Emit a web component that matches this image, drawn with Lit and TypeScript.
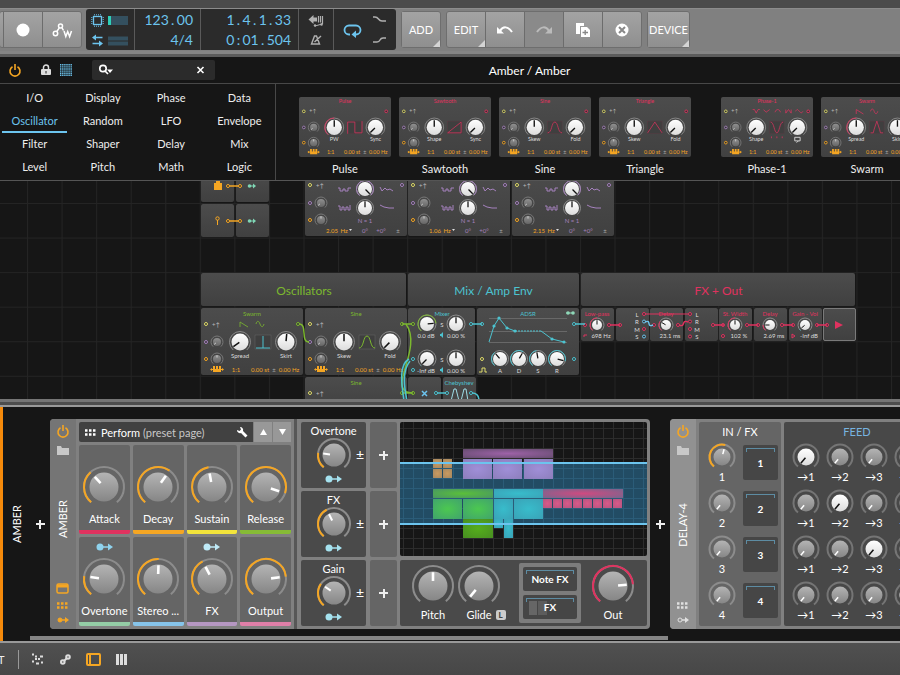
import { LitElement, html, svg, css, nothing } from "lit";
import { customElement, state } from "lit/decorators.js";
import { classMap } from "lit/directives/class-map.js";
import { styleMap } from "lit/directives/style-map.js";

const AMBER = "#f5a623";
const BLUE = "#6cc4ee";
const CYAN = "#4cc3d0";
const GREEN = "#7cb82f";
const PINK = "#e0325f";
const LILAC = "#a581bd";
const YELLOW = "#e0dc6a";

/* ---------- shared drawing helpers ---------- */

const point = (cx: number, cy: number, r: number, deg: number) => {
  const a = (deg * Math.PI) / 180;
  return [(cx + r * Math.sin(a)).toFixed(2), (cy - r * Math.cos(a)).toFixed(2)];
};

const arc = (cx: number, cy: number, r: number, from: number, to: number) => {
  const [x0, y0] = point(cx, cy, r, from);
  const [x1, y1] = point(cx, cy, r, to);
  return `M${x0} ${y0}A${r} ${r} 0 ${to - from > 180 ? 1 : 0} 1 ${x1} ${y1}`;
};

interface Dial {
  x: number;
  y: number;
  r: number;
  ring: number;
  angle: number;
  label: string;
  from?: number;
  color?: string;
  paint?: "light" | "mid" | "dim";
  stroke?: number;
  track?: string;
  live?: boolean;
}

const dial = (d: Dial) => {
  const paint = d.paint ?? "mid";
  const w = d.stroke ?? 2;
  const light = paint === "light";
  const [ax, ay] = point(d.x, d.y, light ? d.r * 0.1 : d.r * 0.35, d.angle);
  const [bx, by] = point(d.x, d.y, d.r * 0.95, d.angle);
  const size = d.ring * 2;
  return svg`
    <path d=${arc(d.x, d.y, d.ring, -140, 140)} fill="none" stroke=${d.track ?? "#8c8c8c"} stroke-width=${w}></path>
    ${d.color ? svg`<path d=${arc(d.x, d.y, d.ring, d.from ?? -140, d.angle)} fill="none" stroke=${d.color} stroke-width=${w}></path>` : nothing}
    <circle cx=${d.x} cy=${d.y} r=${d.r} fill="url(#${paint})"></circle>
    <path d="M${ax} ${ay}L${bx} ${by}" stroke=${light ? "#111" : paint === "dim" ? "#ccc" : "#fff"} stroke-width=${Math.max(1, d.r * 0.18)}></path>
    ${d.live === false ? nothing : svg`<foreignObject x=${d.x - d.ring} y=${d.y - d.ring} width=${size} height=${size}>
      <input class="drag" type="range" min="-140" max="140" .value=${String(d.angle)} aria-label=${d.label}>
    </foreignObject>`}`;
};

const paints = html`<svg class="paints" width="0" height="0" aria-hidden="true"><defs>
  <linearGradient id="light" x1="0" y1="0" x2="0" y2="1"><stop offset="0" stop-color="#fff"/><stop offset="1" stop-color="#dcdcdc"/></linearGradient>
  <linearGradient id="mid" x1="0" y1="0" x2="0" y2="1"><stop offset="0" stop-color="#b4b4b4"/><stop offset="1" stop-color="#868686"/></linearGradient>
  <linearGradient id="dim" x1="0" y1="0" x2="0" y2="1"><stop offset="0" stop-color="#8f8f8f"/><stop offset="1" stop-color="#666"/></linearGradient>
</defs></svg>`;

const port = (x: number, y: number, c: string) =>
  svg`<circle cx=${x} cy=${y} r="1.5" fill="#333" stroke=${c} stroke-width="1"></circle>`;

const txt = (x: number, y: number, s: string, fill = "#ddd", size = "s6") =>
  svg`<text class=${size} x=${x} y=${y} fill=${fill}>${s}</text>`;

const line = (d: string, c: string, w = 1) =>
  svg`<path d=${d} fill="none" stroke=${c} stroke-width=${w} stroke-linejoin="round"></path>`;

const shared = css`
  * { box-sizing: border-box; }
  :host { display: block; font-family: Lato, "Open Sans", sans-serif; color: #eee; }
  button { font: inherit; color: inherit; border: 0; margin: 0; padding: 0; background: none; cursor: pointer; }
  svg { display: block; overflow: visible; }
  .paints { position: absolute; }
  .drag { appearance: none; display: block; width: 100%; height: 100%; margin: 0; opacity: 0; cursor: ns-resize; }
  text { text-anchor: middle; dominant-baseline: central; font-family: Lato, "Open Sans", sans-serif; }
  .s6 { font-size: 6px; }
  .s12 { font-size: 12px; }
`;

/* ---------- oscillator module face, 102 x 67 ---------- */

interface Face {
  title: string;
  left: string;
  right: string;
  color: string;
  wave: string;
  leftAngle: number;
  rightAngle: number;
  leftArc?: boolean;
  row?: string[];
  live?: boolean;
  palette?: boolean;
}

const WAVES: Record<string, string> = {
  pulse: "M-8 7V-6H0V6H8V-7",
  saw: "M-8 6L7 -6V6Z",
  bell: "M-8 6C-3 6 -4 -6 0 -6S3 6 8 6",
  tri: "M-8 6L0 -6L8 6",
  valley: "M-7 -6C-3 -6 -3 6 0 6S3 -6 7 -6M-6 10V12M0 10V12M6 10V12",
  spike: "M-7 6H-4L-3 2L0 -7L3 2L4 6H7",
  impulse: "M-7 6H7M0 6V-6",
};

const faceTop = (title: string, color: string) => svg`
  ${txt(51, 5, title, color)}
  ${port(5, 16, YELLOW)}${txt(15, 16, "+↑", "#bbb")}${port(97, 16, color)}`;

const oscillator = (f: Face) => svg`
  ${faceTop(f.title, f.color)}
  ${port(5, 34, LILAC)}${port(5, 51, AMBER)}
  ${dial({ x: 16, y: 34, r: 4, ring: 6, angle: -130, label: `${f.title} phase amount`, paint: "dim", stroke: 1, track: "#777", live: f.live })}
  ${dial({ x: 16, y: 51, r: 4, ring: 6, angle: 0, label: `${f.title} pitch amount`, paint: "dim", stroke: 1, track: "#777", live: f.live })}
  ${dial({ x: 39, y: 34, r: 8.5, ring: 10.5, angle: f.leftAngle, label: f.left, paint: "light", color: f.leftArc ? f.color : undefined, stroke: 1, live: f.live })}
  ${dial({ x: 85, y: 34, r: 8.5, ring: 10.5, angle: f.rightAngle, label: f.right || "Shape", paint: "light", stroke: 1, live: f.live })}
  <rect x="54" y="27" width="16" height="14" fill="#3f3f3f" stroke=${f.palette ? "#5c3a44" : "#666"} stroke-width=".5"></rect>
  <g transform="translate(62 34)" opacity=${f.palette ? 0.8 : 1}>${line(WAVES[f.wave], f.wave === "impulse" ? CYAN : f.color)}</g>
  ${(f.row ?? []).map((d, i, all) => svg`<g transform="translate(${all.length > 2 ? 39 + i * 12 : 43 + i * 16} 16)" opacity=".8">${line(d, f.color)}</g>`)}
  ${txt(39, 47, f.left)}
  ${f.right ? txt(85, 47, f.right) : line("M82 45H88V49H82ZM84 51L86 49", "#ddd")}
  <g fill=${AMBER}><path d="M12 58H14V61H15V58H17V61H18V58H20V64H12ZM11 60V63L9 61.500ZM21 60V63L23 61.500Z"></path><path d="M10 61H22V62H10Z"></path></g>
  ${txt(35, 61, "1:1", AMBER)}${txt(59, 61, "0.00 st", AMBER)}${txt(73, 61, "±", "#aaa")}${txt(88, 61, "0.00 Hz", AMBER)}`;

const MINI = ["M-4 -2H-2L0 2L2 -2H4", "M-4 -2L-1 1L3 -2", "M-3 1C-2 -3 2 -3 3 1", "M-3 -2V2L0 -2L3 2V-2", "M-4 0C-2 -4 -1 -1 0 0S3 3 4 0"];
const SWARM_ROW = ["M-4 3V-2L4 3", "M-4 0C-3 -4 -1 -3 0 0S3 4 4 0"];

const PALETTE: Array<Face & { name: string; gap?: boolean }> = [
  { name: "Pulse", title: "Pulse", left: "PW", right: "Sync", color: PINK, wave: "pulse", leftAngle: 0, rightAngle: -135, leftArc: true },
  { name: "Sawtooth", title: "Sawtooth", left: "Shape", right: "Sync", color: PINK, wave: "saw", leftAngle: 0, rightAngle: -135 },
  { name: "Sine", title: "Sine", left: "Skew", right: "Fold", color: PINK, wave: "bell", leftAngle: 0, rightAngle: -135 },
  { name: "Triangle", title: "Triangle", left: "Skew", right: "Fold", color: PINK, wave: "tri", leftAngle: 0, rightAngle: -135 },
  { name: "Phase-1", title: "Phase-1", left: "Shape", right: "", color: PINK, wave: "valley", leftAngle: -135, rightAngle: -135, row: MINI, gap: true },
  { name: "Swarm", title: "Swarm", left: "Spread", right: "Skirt", color: PINK, wave: "spike", leftAngle: 0, rightAngle: 0, leftArc: true, row: SWARM_ROW },
];

/* ---------- transport bar ---------- */

const lcd = (s: string) => [...s].map((c) => (/[.:]/.test(c) ? html`<span class="dot">${c}</span>` : c));

@customElement("transport-bar")
export class TransportBar extends LitElement {
  static styles = [shared, css`
    :host { background: #808080; border-top: 8px solid #4b4b4b; border-bottom: 3px solid #5c5c5c; height: 57px; box-shadow: inset 0 1px #8c8c8c, inset 0 -3px #858585; flex: none; }
    .bar { display: flex; align-items: center; height: 43px; overflow: hidden; }
    .group { display: flex; gap: 1px; height: 35px; border-radius: 2px; background: #6c6c6c; outline: 1px solid #6e6e6e; flex: none; }
    .key { position: relative; width: 38px; display: grid; place-items: center; background: linear-gradient(#a3a3a3, #8f8f8f); color: #fff; font-size: 11px; }
    .key:first-child { border-radius: 2px 0 0 2px; }
    .key:last-child { border-radius: 0 2px 2px 0; }
    .edge { width: 3px; }
    .off { background: #8a8a8a; color: #bbb; }
    .wide { width: 41px; }
    .menu::after { content: ""; position: absolute; right: 0; bottom: 0; border: solid; border-width: 0 0 7px 7px; border-color: transparent transparent #d4d4d4 transparent; }
    .display { display: flex; height: 41px; margin: 0 6px 0 5px; background: #2b2b2b; border-radius: 3px; flex: none; color: #6cc4ee; }
    .cell { display: flex; flex-direction: column; justify-content: center; border-right: 1px solid #5a5a5a; }
    .cell:last-child { border: 0; }
    .load { width: 49px; }
    .tempo { width: 66px; padding-right: 7px; }
    .clock { width: 98px; padding-right: 7px; }
    .cues { width: 35px; align-items: center; }
    .loop { width: 62px; }
    .lcd { font-size: 14px; line-height: 19px; text-align: right; }
    .lcd + .lcd { margin-top: 1px; }
    .dot { display: inline-block; width: 8px; text-align: center; }
    .next { margin-left: 7px; }
  `];

  render() {
    return html`<div class="bar">
      <div class="group">
        <button class="key edge" aria-label="Play"></button>
        <button class="key" aria-label="Record"><svg width="16" height="16"><circle cx="8" cy="8" r="6.500" fill="#fff"/></svg></button>
        <button class="key" aria-label="Write automation"><svg width="20" height="16" fill="none" stroke="#fff" stroke-width="1.500"><circle cx="3.500" cy="11.500" r="2.200"/><circle cx="8.500" cy="4" r="2"/><path d="M4.800 9.500L7.300 5.800M10 5.800L11.500 8.500"/><path d="M12 9L13.800 14.500L15.700 9.500L17.600 14.500L19.500 9"/></svg></button>
      </div>
      <div class="display">
        <div class="cell load"><svg width="48" height="40" fill="none" stroke=${BLUE}>
          <rect x="7.500" y="6.500" width="8" height="8" stroke-width="1.300"/><path d="M8 4.800H15.500M8 16.200H15.500M5.800 7V14.500M17.200 7V14.500" stroke-dasharray="1 1"/>
          <path d="M9 27.500H16.500M6.500 33.500H14" stroke-width="1.500"/><path d="M10 24.500L6 27.500L10 30.500ZM13 30.500L17 33.500L13 36.500Z" fill=${BLUE} stroke="none"/>
          <path d="M22 28.500H42M22 33.500H42" stroke="#34505f" stroke-width="4"/><path d="M22 10.500H42" stroke="#34505f" stroke-width="9"/><path d="M23.500 6V15" stroke="#2fd0b8" stroke-width="3"/>
        </svg></div>
        <div class="cell tempo"><div class="lcd">${lcd("123.00")}</div><div class="lcd">4/4</div></div>
        <div class="cell clock"><div class="lcd">${lcd("1.4.1.33")}</div><div class="lcd">${lcd("0:01.504")}</div></div>
        <div class="cell cues"><svg width="34" height="40" fill="none" stroke="#b0b0b0">
          <path d="M9.500 9.500L14.500 5V14Z" fill="#b0b0b0" stroke="none"/><path d="M14 9.500H18" stroke-width="4"/><path d="M19.500 6V12.500M21.500 6V12.500M23.500 6V14" stroke-width="1.200"/><path d="M16 16L23 14"/><circle cx="16" cy="15.500" r="1.200" fill="#b0b0b0" stroke="none"/><circle cx="22.500" cy="14.500" r="1.300" fill="#b0b0b0" stroke="none"/>
          <path d="M12.500 34L15.500 26H17.500L20.500 34ZM15.500 32L22 26" stroke-width="1.400"/>
        </svg></div>
        <div class="cell loop"><svg width="62" height="40" fill="none">
          <path d="M16 24.500H15A4.500 4.500 0 0 1 15 15.500H22A4.500 4.500 0 0 1 22 24.500H20" stroke=${BLUE} stroke-width="1.800"/><path d="M22 20.500L17.500 24.500L22 28Z" fill=${BLUE}/>
          <path d="M39 7H41C45 7 44 11 48 11H52M39 32H43C47 32 45 28 49 28H52" stroke="#b0b0b0" stroke-width="1.500"/>
        </svg></div>
      </div>
      <div class="group"><button class="key menu">ADD</button></div>
      <div class="group next">
        <button class="key menu">EDIT</button>
        <button class="key" aria-label="Undo"><svg width="18" height="12" fill="none" stroke="#fff" stroke-width="2"><path d="M4 7C7 2 12 2 16 8"/><path d="M1 3V9.500H8Z" fill="#fff" stroke="none"/></svg></button>
        <button class="key off" aria-label="Redo" disabled><svg width="18" height="12" fill="none" stroke="#bbb" stroke-width="2"><path d="M14 7C11 2 6 2 2 8"/><path d="M17 3V9.500H10Z" fill="#bbb" stroke="none"/></svg></button>
        <button class="key" aria-label="Duplicate"><svg width="16" height="16"><path d="M1 1H9V4H5V12H1Z" fill="#fff"/><path d="M6 5H12L15 8V15H6Z" fill="#fff"/><path d="M7.500 10.500H13M10.200 8V13" stroke="#888" stroke-width="1.300"/></svg></button>
        <button class="key" aria-label="Delete"><svg width="14" height="14"><circle cx="7" cy="7" r="6.500" fill="#fff"/><path d="M4 4L10 10M10 4L4 10" stroke="#888" stroke-width="2"/></svg></button>
      </div>
      <div class="group next"><button class="key wide menu">DEVICE</button></div>
    </div>`;
  }
}

/* ---------- module palette ---------- */

const CATEGORIES = ["I/O", "Display", "Phase", "Data", "Oscillator", "Random", "LFO", "Envelope", "Filter", "Shaper", "Delay", "Mix", "Level", "Pitch", "Math", "Logic"];

const power = (c: string) => svg`<path d="M3.500 2.800A5 5 0 1 0 8.500 2.800M6 0V6" fill="none" stroke=${c} stroke-width="1.600"></path>`;

@customElement("module-palette")
export class ModulePalette extends LitElement {
  @state() private category = "Oscillator";

  static styles = [shared, css`
    :host { background: #161616; flex: none; }
    .head { display: flex; align-items: center; height: 27px; border-bottom: 1px solid #484848; }
    .tools { display: flex; align-items: center; padding-left: 9px; }
    .tools > * { flex: none; }
    .tools > button:nth-child(2) { margin: 0 9px 0 20px; }
    .search { display: flex; align-items: center; width: 123px; height: 20px; margin-left: 20px; padding: 0 11px 0 7px; border-radius: 2px; background: #2b2b2b; }
    .search input { flex: 1; min-width: 0; height: 16px; border: 0; background: none; color: #eee; font: inherit; font-size: 11px; outline: none; }
    .title { flex: 1; margin: 0; padding-right: 56px; text-align: center; font-size: 12px; font-weight: 400; color: #fff; }
    .body { display: flex; height: 97px; border-bottom: 1px solid #555; }
    .cats { flex: none; width: 276px; padding: 3px 2px 0 0; display: grid; grid-template-columns: repeat(4, 1fr); grid-auto-rows: 23px; border-right: 1px solid #484848; }
    .cat { font-size: 11px; margin: 0 1px 0 2px; border-bottom: 2px solid transparent; }
    .cat.on { color: #6cc4ee; border-color: #6cc4ee; }
    .list { display: flex; gap: 8px; min-width: 0; overflow: hidden; padding: 13px 0 0 23px; margin: 0; list-style: none; }
    .apart { margin-left: 22px; }
    .card { display: block; width: 92px; font-size: 11px; line-height: 23px; }
    .thumb { display: block; height: 60px; border-radius: 2px; background: linear-gradient(#4c4c4c, #414141); }
  `];

  render() {
    return html`${paints}
      <header class="head">
        <div class="tools">
          <button aria-label="Power"><svg width="12" height="12">${power(AMBER)}</svg></button>
          <button aria-label="Lock"><svg width="10" height="12"><rect x="0" y="5" width="10" height="6" rx="1" fill="#ddd"/><path d="M2.500 5V3.500A2.500 2.500 0 0 1 7.500 3.500V5" stroke="#ddd" stroke-width="1.500" fill="none"/><path d="M5 7V9.500" stroke="#222"/></svg></button>
          <button aria-label="Grid"><svg width="12" height="12">${[0.8, 2.9, 5, 7.1, 9.2, 11.3].map((y) => svg`<path d="M0 ${y}H12" stroke=${BLUE} stroke-width="1.400" stroke-dasharray="1.400 .7"></path>`)}</svg></button>
          <label class="search">
            <svg width="14" height="12" fill="none" stroke="#fff" stroke-width="1.700"><circle cx="4" cy="4.500" r="3.200"/><path d="M6 7L9 10"/><path d="M8 5.500H14L11 9Z" fill="#fff" stroke="none"/></svg>
            <input type="text" aria-label="Search modules">
            <button aria-label="Clear search"><svg width="7" height="8"><path d="M.5 1L6.500 7M6.500 1L.5 7" stroke="#fff" stroke-width="1.600"/></svg></button>
          </label>
        </div>
        <h1 class="title">Amber / Amber</h1>
      </header>
      <div class="body">
        <nav class="cats">${CATEGORIES.map((c) => html`<button class=${classMap({ cat: true, on: c === this.category })} aria-pressed=${c === this.category} @click=${() => (this.category = c)}>${c}</button>`)}</nav>
        <ul class="list">${PALETTE.map((f) => html`<li class=${f.gap ? "apart" : ""}><button class="card"><span class="thumb"><svg width="92" height="60" viewBox="0 0 102 67">${oscillator({ ...f, live: false, palette: true })}</svg></span>${f.name}</button></li>`)}</ul>
      </div>`;
  }
}

/* ---------- patch canvas ---------- */

const PITCH = 34.56;
const cellX = (col: number) => 201 + Math.round(col * PITCH);
const cellY = (row: number) => 23 + Math.round(row * PITCH);

const lfo = (rate: string) => svg`
  ${port(5, 16, YELLOW)}${txt(15, 16, "+↑", "#bbb")}${port(5, 34, LILAC)}${port(5, 51, AMBER)}${port(97, 16, LILAC)}
  ${dial({ x: 16, y: 34, r: 4, ring: 6, angle: -130, label: "Phase amount", paint: "dim", stroke: 1, track: "#777" })}
  ${dial({ x: 16, y: 51, r: 4, ring: 6, angle: 0, label: "Rate amount", paint: "dim", stroke: 1, track: "#777" })}
  ${dial({ x: 60, y: 20, r: 7, ring: 8.5, angle: 135, label: "Smooth", paint: "light", color: LILAC, stroke: 1 })}
  ${dial({ x: 60, y: 39, r: 7, ring: 8.5, angle: 0, label: "Feedback", paint: "light", stroke: 1 })}
  ${line("M33 19H35V22H38V20H40V22H43V19H46", LILAC)}
  ${line("M75 18L77 22L80 19L82 21L85 20L88 22", LILAC)}
  ${line("M33 37H35V41H37V38H39V41H41V38H43V41H45V36", LILAC)}
  ${line("M75 36L79 38L84 39L89 39", LILAC)}
  ${txt(60, 51, "N = 1", LILAC)}
  ${txt(27, 61, rate, AMBER)}${txt(39, 61, "Hz", AMBER)}<path d="M44 60H47L45.500 62Z" fill="#ddd"></path>
  ${txt(60, 61, "0°", LILAC)}${txt(76, 61, "+0°", LILAC)}${txt(93, 61, "±", "#aaa")}`;

const smallFx = (title: string, value: string, angle: number, color: string) => svg`
  ${txt(16, 5, title, PINK)}
  ${dial({ x: 16, y: 17, r: 5, ring: 7, angle, label: title, paint: "light", color, stroke: 1 })}
  ${txt(20, 27, value)}${port(4, 17, PINK)}${port(28, 17, PINK)}`;

const lrms = (labelX: number, portX: number, colors: string[]) =>
  ["L", "R", "M", "S"].map((s, i) => svg`${txt(labelX, 6 + i * 7.5, s)}${port(portX, 6 + i * 7.5, colors[i])}`);

const strip = (y: number, db: string, angle: number, color: string) => svg`
  ${dial({ x: 19, y, r: 7, ring: 9, angle, label: "Level", paint: "light", color, stroke: 1 })}
  ${dial({ x: 48, y, r: 7, ring: 9, angle: 0, label: "Pan", paint: "light", stroke: 1 })}
  ${txt(34, y, "S")}${txt(18, y + 11, db)}${txt(48, y + 11, "0.00 %")}
  <path d="M32 ${y + 10}H33L35 ${y + 8}V${y + 14}L33 ${y + 12}H32Z" fill=${CYAN}></path>`;

const adsr = svg`
  ${txt(51, 5, "ADSR", CYAN)}
  ${line("M89 5H96", "#8fd8b8", 1)}<circle cx="91" cy="5" r="1.800" fill="#8fd8b8"></circle><circle cx="96" cy="5" r="1.800" fill="#8fd8b8"></circle>
  ${line("M12 10.500H90M12 23.500H90M12 34.500H90", "#686868")}
  ${line("M12 34L17 18L22 10L30 20L38 23M64 23L75 31L87 34", CYAN, 1)}
  <path d="M38 23H64" stroke=${CYAN} stroke-dasharray="2 1"></path>
  ${[[17, 18], [22, 10], [30, 20], [38, 23], [75, 31], [87, 34]].map(([x, y]) => svg`<circle cx=${x} cy=${y} r="1.600" fill=${CYAN}></circle>`)}
  ${[["A", 23, -40], ["D", 42, 30], ["S", 61, -10], ["R", 80, 105]].map(([n, x, a]) => svg`${dial({ x: x as number, y: 51, r: 7, ring: 8.5, angle: a as number, label: n as string, paint: "light", color: CYAN, stroke: 1 })}${txt(x as number, 62, n as string)}`)}
  ${port(5, 51, YELLOW)}${line("M2 64H5V60H8V64H10", YELLOW)}
  ${port(5, 16, CYAN)}${port(97, 16, CYAN)}${port(97, 51, CYAN)}`;

const heading = (w: number, s: string, c: string) => svg`<text class="s12" x=${w / 2} y="17" fill=${c}>${s}</text>`;

interface Node { col: number; row: number; w: number; h: number; art: unknown; sel?: boolean }

const NODES: Node[] = [
  { col: 0, row: -1, w: 1, h: 1, art: svg`<path d="M13 14H15V12H19V14H21V21H13Z" fill=${AMBER}></path>` },
  { col: 1, row: -1, w: 1, h: 1, art: nothing },
  { col: 0, row: 0, w: 1, h: 1, art: svg`<circle cx="16.500" cy="14.500" r="1.700" fill="none" stroke=${AMBER}></circle>${line("M16.500 16V21", AMBER, 1)}` },
  { col: 1, row: 0, w: 1, h: 1, art: nothing },
  { col: 3, row: -1, w: 3, h: 2, art: lfo("2.05") },
  { col: 6, row: -1, w: 3, h: 2, art: lfo("1.06") },
  { col: 9, row: -1, w: 3, h: 2, art: lfo("2.15") },
  { col: 0, row: 2, w: 6, h: 1, art: heading(206, "Oscillators", GREEN) },
  { col: 6, row: 2, w: 5, h: 1, art: heading(171, "Mix / Amp Env", CYAN) },
  { col: 11, row: 2, w: 8, h: 1, art: heading(275, "FX + Out", PINK) },
  { col: 0, row: 3, w: 3, h: 2, art: oscillator({ title: "Swarm", left: "Spread", right: "Skirt", color: GREEN, wave: "impulse", leftAngle: -125, rightAngle: 5, row: SWARM_ROW }) },
  { col: 3, row: 3, w: 3, h: 2, art: oscillator({ title: "Sine", left: "Skew", right: "Fold", color: GREEN, wave: "bell", leftAngle: 0, rightAngle: -135 }) },
  { col: 3, row: 5, w: 3, h: 1, art: faceTop("Sine", GREEN) },
  { col: 6, row: 3, w: 2, h: 2, art: svg`${txt(34, 5, "Mixer", CYAN)}${strip(16, "0.0 dB", 85, GREEN)}${strip(51, "-Inf dB", -135, CYAN)}${port(5, 16, GREEN)}${port(5, 51, CYAN)}${port(5, 62, CYAN)}${port(63, 16, CYAN)}` },
  { col: 8, row: 3, w: 3, h: 2, art: adsr },
  { col: 6, row: 5, w: 1, h: 1, art: svg`${line("M14 14L19 19M19 14L14 19", BLUE, 1.5)}${port(5, 16, GREEN)}${port(28, 16, CYAN)}` },
  { col: 7, row: 5, w: 1, h: 1, art: svg`${txt(16, 5, "Chebyshev", CYAN)}${line("M8 24L11 12H13L16 24M18 24L21 12H23L25 24", "#9fdde6")}${port(4, 16, CYAN)}${port(28, 16, CYAN)}` },
  { col: 11, row: 3, w: 1, h: 1, art: svg`${smallFx("Low-pass", "698 Hz", 0, PINK)}${line("M3 29V27H6", PINK)}` },
  { col: 12, row: 3, w: 1, h: 1, art: svg`${port(4, 17, PINK)}${lrms(21, 28, [PINK, BLUE, PINK, BLUE])}` },
  { col: 13, row: 3, w: 1, h: 1, art: smallFx("Delay", "23.1 ms", -60, PINK) },
  { col: 14, row: 3, w: 1, h: 1, art: svg`${lrms(12, 5, [PINK, PINK, PINK, PINK])}${port(28, 17, PINK)}` },
  { col: 15, row: 3, w: 1, h: 1, art: svg`${smallFx("St. Width", "102 %", 0, PINK)}${port(4, 28, PINK)}` },
  { col: 16, row: 3, w: 1, h: 1, art: smallFx("Delay", "2.69 ms", -90, PINK) },
  { col: 17, row: 3, w: 1, h: 1, art: svg`${smallFx("Gain - Vol", "-Inf dB", -130, CYAN)}${line("M3 26L6 28L3 30Z", PINK)}` },
  { col: 18, row: 3, w: 1, h: 1, sel: true, art: svg`${port(4, 17, PINK)}<path d="M12 13L20 17L12 21Z" fill=${PINK}></path>` },
];

@customElement("patch-canvas")
export class PatchCanvas extends LitElement {
  static styles = [shared, css`
    :host { position: relative; flex: 1; min-height: 160px; overflow: hidden; background: #161616; }
    .node { position: absolute; border-radius: 2px; background: linear-gradient(#4c4c4c, #404040); }
    .node.sel { outline: 1px solid #7a7a7a; outline-offset: -1px; }
    .mesh, .cables { position: absolute; inset: 0; width: 100%; height: 100%; }
    .cables { pointer-events: none; }
  `];

  render() {
    const hop = (x: number, y: number, c: string, to = 11) => line(`M${x + 1} ${y}H${x + to}`, c, 1.5);
    return html`${paints}
      <svg class="mesh" aria-hidden="true"><defs><pattern id="mesh" x="27" y="22" width=${PITCH} height=${PITCH} patternUnits="userSpaceOnUse"><path d="M0 .5H${PITCH}M.5 0V${PITCH}" stroke="#242424"/></pattern></defs><rect width="100%" height="100%" fill="url(#mesh)"/></svg>
      ${NODES.map((n) => html`<section class=${classMap({ node: true, sel: !!n.sel })} style=${styleMap({ left: `${cellX(n.col)}px`, top: `${cellY(n.row)}px`, width: `${Math.round(n.w * PITCH) - 2}px`, height: `${Math.round(n.h * PITCH) - 2}px` })}><svg width="100%" height="100%">${n.art}</svg></section>`)}
      <svg class="cables" aria-hidden="true">
        ${[5, 40].map((y) => svg`${hop(228, y, AMBER, 13)}${port(228, y, AMBER)}${port(240, y, AMBER)}${line(`M250 ${y}H255`, "#7fd6b5", 1)}<circle cx="249.500" cy=${y} r="1.800" fill="#7fd6b5"></circle><path d="M253 ${y - 2.5}V${y + 2.5}L256 ${y}Z" fill="#7fd6b5"></path>`)}
        ${line("M299 143C308 143 300 161 309 161", GREEN, 1.5)}
        ${line("M402 143H412M406 143C418 160 404 185 402 200C401 208 405 212 413 212M402 212H412", GREEN, 1.5)}
        ${line("M409 178C398 184 402 205 404 220M410 180C402 190 404 205 407 220", CYAN, 1.5)}
        ${hop(471, 143, CYAN)}${hop(574, 143, CYAN)}${hop(436, 212, CYAN, 10)}${line("M472 212C478 212 479 216 479 220", CYAN, 1.5)}
        ${hop(609, 144, PINK)}${hop(713, 144, PINK)}${hop(747, 144, PINK)}${hop(782, 144, PINK)}${hop(816, 144, PINK)}
        ${line("M645 133H688", PINK, 1)}
        ${line("M645 141C652 138 646 147 653 144", BLUE, 1.5)}
        ${line("M679 144C686 147 681 138 688 141", PINK, 1.5)}
      </svg>`;
  }
}

/* ---------- device chain ---------- */

const modMark = (c: string) => html`<svg width="17" height="8"><circle cx="4" cy="4" r="3.500" fill=${c}/><path d="M4 4H14" stroke=${c} stroke-width="1.500"/><path d="M12 .5V7.500L17 4Z" fill=${c}/></svg>`;

interface Macro { name: string; angle: number; color: string; mod?: string }
const MACROS: Macro[] = [
  { name: "Attack", angle: -42, color: "#e0325f" },
  { name: "Decay", angle: 35, color: "#f5a623" },
  { name: "Sustain", angle: -10, color: "#f3e43b" },
  { name: "Release", angle: 108, color: "#86bb36" },
  { name: "Overtone", angle: -82, color: "#94cda6", mod: "#8fd3ee" },
  { name: "Stereo ...", angle: 2, color: "#86c4ea" },
  { name: "FX", angle: -28, color: "#b597c2", mod: "#bfeaf7" },
  { name: "Output", angle: 83, color: "#e07fa8" },
];

const knob = (label: string, size: number, ring: number, r: number, angle: number, color?: string, paint: Dial["paint"] = "mid", track?: string) =>
  html`<svg width=${size} height=${size}>${dial({ x: size / 2, y: size / 2, r, ring, angle, color, label, paint, track })}</svg>`;

const dots = (c: string) => svg`<path d="M0 1.500H11M0 5.500H11" stroke=${c} stroke-width="2.500" stroke-dasharray="2.500 1.500"></path>`;
const folder = html`<svg width="12" height="9"><path d="M0 0H4L5 2H12V9H0Z" fill="#c8c8c8"/></svg>`;

const block = (x: number, y: number, w: number, h: number, id: string) => svg`<rect x=${x} y=${y} width=${w} height=${h} fill="url(#${id})"></rect>`;
const glow = (id: string, a: string, b: string) => svg`<radialGradient id=${id} r=".8"><stop offset="0" stop-color=${a}></stop><stop offset="1" stop-color=${b}></stop></radialGradient>`;

const overview = html`<svg class="map" viewBox="0 0 247 134" preserveAspectRatio="xMidYMid slice" role="img" aria-label="Patch overview">
  <defs>
    <pattern id="grid" x="3" y="6" width="10" height="10" patternUnits="userSpaceOnUse"><path d="M0 .5H10M.5 0V10" stroke="#2c2c2c"/></pattern>
    <pattern id="bluegrid" x="3" y="6" width="10" height="10" patternUnits="userSpaceOnUse"><path d="M0 .5H10M.5 0V10" stroke="#2b5c78"/></pattern>
    ${glow("og", "#c89a60", "#a08560")}${glow("pu", "#9e62a8", "#5e4a68")}${glow("pl", "#a08fd8", "#8a7cb8")}${glow("gh", "#5bbf3a", "#45906a")}${glow("gb", "#4cc850", "#3f9e72")}${glow("gd", "#55ae1c", "#468a22")}${glow("cy", "#38bccb", "#3a9fb4")}${glow("ph", "#d04a80", "#6a6a90")}${glow("pk", "#d85a88", "#b05480")}
  </defs>
  <rect width="247" height="134" fill="#161616"/><rect width="247" height="134" fill="url(#grid)"/>
  <rect y="41" width="247" height="61" fill="#224c64"/><rect y="41" width="247" height="61" fill="url(#bluegrid)"/>
  ${[33, 43].map((x) => [37, 47].map((y) => block(x, y, 9, 9, "og")))}
  ${block(63, 27, 90, 9, "pu")}${[63, 93, 124].map((x) => block(x, 37, 29, 20, "pl"))}
  ${block(33, 67, 60, 9, "gh")}${block(33, 77, 29, 20, "gb")}${block(63, 77, 30, 20, "gb")}${block(63, 97, 30, 19, "gd")}
  ${block(94, 67, 49, 9, "cy")}${block(94, 77, 19, 20, "cy")}${block(114, 77, 29, 20, "cy")}${block(94, 97, 9, 9, "cy")}${block(104, 97, 9, 19, "cy")}
  ${block(143, 67, 80, 9, "ph")}${[0, 1, 2, 3, 4, 5, 6, 7].map((i) => block(143 + i * 10, 77, 9, 9, "pk"))}
  <path d="M0 41H247M0 102H247" stroke=${BLUE} stroke-width="2"/>
</svg>`;

@customElement("device-chain")
export class DeviceChain extends LitElement {
  static styles = [shared, css`
    :host { display: flex; flex-direction: column; background: #161616; border-left: 3px solid #f58a0b; height: 234px; flex: none; font-size: 11px; color: #fff; overflow: hidden; }
    .row { display: flex; padding-top: 12px; height: 222px; overflow: hidden; }
    .track { width: 27px; flex: none; display: grid; place-items: center; }
    .up { writing-mode: vertical-rl; transform: rotate(180deg); line-height: 16px; }
    .add { width: 20px; flex: none; display: grid; place-items: center; }
    .plus { width: 9px; height: 9px; background: linear-gradient(#eee, #eee) center / 9px 2px no-repeat, linear-gradient(#eee, #eee) center / 2px 9px no-repeat; }
    .device { display: flex; flex: none; height: 210px; border-radius: 4px; background: #808080; padding: 3px 3px 3px 0; gap: 3px; }
    .spine { width: 26px; display: flex; flex-direction: column; align-items: center; background: #757575; margin: -3px 0; border-radius: 4px 0 0 4px; padding: 6px 1px 6px 0; }
    .spine.pale { background: #919191; }
    .spine > * { flex: none; }
    .spine .up { margin: auto; }
    .spine .top { margin-bottom: 9px; }
    .spine .gap { margin-top: 7px; }
    .macros { width: 212px; display: grid; grid-template: 20px 89px 89px / repeat(4, 1fr); gap: 3px; }
    .page { grid-column: 1 / -1; display: flex; align-items: stretch; gap: 1px; }
    .name { flex: 1; display: flex; align-items: center; gap: 5px; background: #414141; border-radius: 2px 0 0 2px; padding: 0 5px 0 6px; }
    .name em { font-style: normal; color: #c8c8c8; }
    .name svg:last-child { margin-left: auto; }
    .step { width: 18px; background: #989898; display: grid; place-items: center; }
    .pad { display: flex; flex-direction: column; align-items: center; background: #656565; border-radius: 2px; border-bottom: 4px solid; overflow: hidden; }
    .mod { flex: 1; display: grid; place-items: center; }
    .cap { height: 21px; line-height: 20px; white-space: nowrap; }
    .rule { width: 3px; background: #575757; margin: -3px 1px -3px 0; }
    .slots { width: 96px; display: grid; grid-template: repeat(3, 1fr) / 65px 27px; gap: 3px 4px; }
    .slot { display: grid; grid-template: 17px 32px 1fr / 1fr 34px 1fr; place-items: center; background: #4a4a4a; border-radius: 2px; }
    .slot .hd { grid-column: 1 / -1; white-space: nowrap; }
    .slot .kn { grid-column: 2; }
    .slot .pm { font-size: 14px; line-height: 16px; justify-self: end; padding-right: 2px; }
    .slot .md { grid-column: 1 / -1; padding-bottom: 2px; }
    .more { background: #656565; border-radius: 2px; display: grid; place-items: center; }
    .main { width: 247px; display: flex; flex-direction: column; gap: 4px; }
    .map { width: 100%; height: 134px; border-radius: 2px; overflow: hidden; }
    .panel { height: 66px; background: #4a4a4a; border-radius: 2px; display: flex; align-items: center; padding: 0 10px; }
    .ctl { width: 46px; display: flex; flex-direction: column; align-items: center; }
    .lab { display: flex; align-items: center; gap: 4px; line-height: 14px; }
    .key { background: #ccc; color: #444; border-radius: 2px; font-size: 8px; font-weight: 900; width: 10px; height: 10px; line-height: 10px; text-align: center; margin-right: -14px; }
    .chains { width: 62px; height: 60px; margin: 0 9px 0 17px; padding: 4px; display: grid; gap: 4px; background: #7c7c7c; border-radius: 2px; }
    .cell { position: relative; display: grid; place-items: center; background: #464646; border-radius: 2px; font-size: 10px; font-weight: 700; }
    .cell::before { content: ""; position: absolute; inset: 3px 3px auto; height: 3px; border: 1px solid #5d8ca3; border-bottom: 0; }
    .cell span { z-index: 1; }
    .cell i { position: absolute; left: 6px; top: 6px; width: 18px; height: 14px; background: linear-gradient(90deg, #666 8px, #464646 8px 9px, #5c5c5c 9px); }
    .io { width: 82px; background: #656565; border-radius: 2px; }
    .feed { width: 146px; background: #484848; border-radius: 2px; }
    .ttl { margin: 0; font-size: 11px; line-height: 19px; text-align: center; font-weight: 400; }
    .feed .ttl { color: #78b4e0; }
    .line { display: grid; height: 46px; align-items: start; justify-content: center; padding-top: 3px; }
    .io .line { grid-template-columns: 34px 35px; gap: 4px; padding-left: 3px; }
    .feed .line { grid-template-columns: repeat(4, 34px); }
    .k { display: flex; flex-direction: column; align-items: center; line-height: 14px; }
    .line svg { margin: -2px 0; }
    .line .cell { height: 35px; margin-top: 1px; }
    .scroll { height: 4px; width: 638px; margin: 7px 0 0 27px; background: #858585; flex: none; }
  `];

  private spine(name: string, c: string, pale = false) {
    return html`<div class=${classMap({ spine: true, pale })}>
      <button class="top" aria-label="${name} power"><svg width="12" height="12">${power(AMBER)}</svg></button>${folder}
      <span class="up">${name}</span>
      ${pale ? nothing : html`<svg width="14" height="12"><rect x="1" y="1" width="11" height="9" rx="1.500" fill="none" stroke=${c} stroke-width="1.500"/><path d="M1 3H12" stroke=${c} stroke-width="3"/></svg>`}
      <svg class="gap" width="11" height="7">${dots(c)}</svg>
      <svg class="gap" width="12" height="7"><circle cx="3" cy="4" r="2" fill=${pale ? "none" : c} stroke=${c}/><path d="M5 4H9" stroke=${c} stroke-width="1.500"/><path d="M8 1V7L12 4Z" fill=${c}/></svg>
    </div>`;
  }

  render() {
    return html`${paints}<div class="row">
      <div class="track"><span class="up">AMBER</span></div>
      <button class="add" aria-label="Add device before"><span class="plus"></span></button>
      <article class="device">
        ${this.spine("AMBER", AMBER)}
        <div class="macros">
          <div class="page">
            <div class="name"><svg width="11" height="7">${dots("#fff")}</svg><span>Perform <em>(preset page)</em></span>
              <svg width="12" height="12"><path d="M1 4A3 3 0 0 0 5 7L9.500 11.500L11.500 9.500L7 5A3 3 0 0 0 4 1L5 3.500L3.500 5Z" fill="#fff"/></svg></div>
            <button class="step" aria-label="Previous page"><svg width="7" height="6"><path d="M0 6H7L3.500 0Z" fill="#fff"/></svg></button>
            <button class="step" aria-label="Next page"><svg width="7" height="6"><path d="M0 0H7L3.500 6Z" fill="#fff"/></svg></button>
          </div>
          ${MACROS.map((m) => html`<div class="pad" style=${styleMap({ borderColor: m.color })}>
            <div class="mod">${m.mod ? modMark(m.mod) : nothing}</div>
            ${knob(m.name, 44, 20, 14.5, m.angle, AMBER)}<span class="cap">${m.name}</span></div>`)}
        </div>
        <div class="rule"></div>
        <div class="slots">
          ${[["Overtone", -82], ["FX", -27], ["Gain", -55]].map(([n, a]) => html`
            <div class="slot"><span class="hd">${n}</span><span class="kn">${knob(n as string, 36, 16, 11.5, a as number, AMBER)}</span><span class="pm">±</span><span class="md">${modMark("#a5e2ef")}</span></div>
            <button class="more" aria-label="Add modulator"><span class="plus"></span></button>`)}
        </div>
        <div class="main">
          ${overview}
          <div class="panel">
            <div class="ctl">${knob("Pitch", 44, 20, 14.5, 0)}<span class="lab">Pitch</span></div>
            <div class="ctl">${knob("Glide", 44, 20, 14.5, -140)}<span class="lab">Glide<span class="key">L</span></span></div>
            <div class="chains"><button class="cell"><span>Note FX</span></button><button class="cell"><i></i><span>FX</span></button></div>
            <div class="ctl">${knob("Out", 44, 20, 14.5, 85, PINK)}<span class="lab">Out</span></div>
          </div>
        </div>
      </article>
      <button class="add" aria-label="Add device after"><span class="plus"></span></button>
      <article class="device">
        ${this.spine("DELAY-4", "#e0e0e0", true)}
        <section class="io"><h2 class="ttl">IN / FX</h2>
          ${[1, 2, 3, 4].map((i) => html`<div class="line"><div class="k">${knob(`Input ${i}`, 30, 12.5, 8.5, i === 1 ? 15 : -140, i === 1 ? AMBER : undefined)}<span>${i}</span></div><button class="cell">${i}</button></div>`)}
        </section>
        <section class="feed"><h2 class="ttl">FEED</h2>
          ${[1, 2, 3, 4].map((r) => html`<div class="line">${[1, 2, 3, 4].map((c) => html`<div class="k">${knob(`Feed ${r} to ${c}`, 30, 12.5, 8.5, -140, undefined, r === c ? "light" : "mid", "#757575")}<span>→${c}</span></div>`)}</div>`)}
        </section>
      </article>
    </div><div class="scroll"></div>`;
  }
}

/* ---------- status bar and shell ---------- */

@customElement("app-root")
export class AppRoot extends LitElement {
  static styles = [shared, css`
    :host { display: flex; flex-direction: column; height: 100vh; overflow: hidden; background: #161616; }
    .split { flex: none; height: 8px; background: #4d4d4d; border-top: 3px solid #757575; border-bottom: 2px solid #999; }
    .foot { flex: none; display: flex; align-items: center; height: 34px; background: linear-gradient(#505050, #474747); border-top: 2px solid #999; overflow: hidden; }
    .tab { width: 18px; font-size: 11px; text-align: left; text-indent: -2px; }
    .bar { width: 1px; height: 19px; background: #999; margin-right: 4px; }
    .ic { width: 28px; display: grid; place-items: center; }
  `];

  render() {
    return html`
      <transport-bar></transport-bar>
      <module-palette></module-palette>
      <patch-canvas></patch-canvas>
      <div class="split"></div>
      <device-chain></device-chain>
      <footer class="foot">
        <button class="tab">T</button><span class="bar"></span>
        <button class="ic" aria-label="Arranger"><svg width="12" height="12" stroke="#ddd" stroke-width="2" fill="none"><path d="M1 1.500H3M4 3.500H6M9 3.500H12M4 6H6M7 6H9M1 8.500H3M5 10.500H8M10 9.500H12"/></svg></button>
        <button class="ic" aria-label="Automation"><svg width="11" height="11" stroke="#ddd" stroke-width="2" fill="none"><circle cx="2.800" cy="8" r="1.800"/><circle cx="8" cy="3" r="1.800"/><path d="M4 7L7 4"/></svg></button>
        <button class="ic" aria-label="Devices"><svg width="15" height="13"><rect x="1" y="1" width="13" height="11" rx="1" fill="none" stroke=${AMBER} stroke-width="2"/><path d="M4 1V12" stroke=${AMBER} stroke-width="2"/></svg></button>
        <button class="ic" aria-label="Mixer"><svg width="11" height="11"><path d="M1.500 0V11M5.500 0V11M9.500 0V11" stroke="#ddd" stroke-width="3"/></svg></button>
      </footer>`;
  }
}
